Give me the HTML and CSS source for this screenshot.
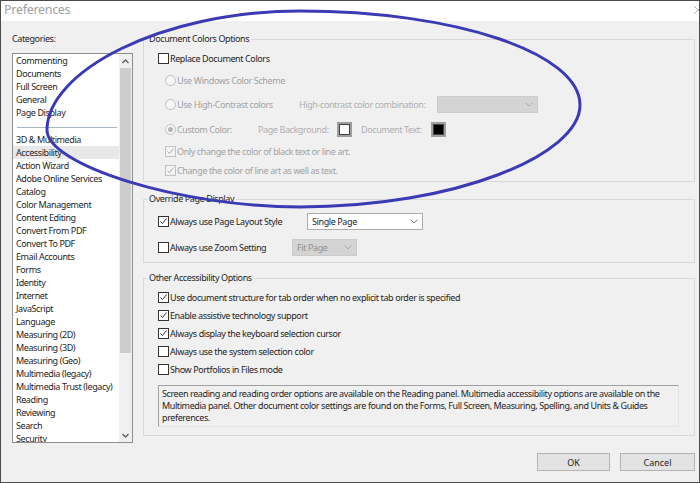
FILE: index.html
```html
<!DOCTYPE html>
<html lang="en">
<head>
  <meta charset="UTF-8" />
  <title>Preferences</title>
  <link rel="stylesheet" href="styles.css">
</head>
<body>
  <div class="window">
    <div class="titlebar">
      <span class="title">Preferences</span>
      <svg class="close" width="10" height="10" viewBox="0 0 10 10"><path d="M1 1l8 8M9 1l-8 8"/></svg>
    </div>

    <div class="main">
      <!-- categories -->
      <div class="sidebar">
        <div class="label">Categories:</div>
        <div class="listbox">
          <ul class="items">
            <li>Commenting</li>
            <li>Documents</li>
            <li>Full Screen</li>
            <li>General</li>
            <li>Page Display</li>
            <li class="sep"></li>
            <li>3D &amp; Multimedia</li>
            <li class="selected">Accessibility</li>
            <li>Action Wizard</li>
            <li>Adobe Online Services</li>
            <li>Catalog</li>
            <li>Color Management</li>
            <li>Content Editing</li>
            <li>Convert From PDF</li>
            <li>Convert To PDF</li>
            <li>Email Accounts</li>
            <li>Forms</li>
            <li>Identity</li>
            <li>Internet</li>
            <li>JavaScript</li>
            <li>Language</li>
            <li>Measuring (2D)</li>
            <li>Measuring (3D)</li>
            <li>Measuring (Geo)</li>
            <li>Multimedia (legacy)</li>
            <li>Multimedia Trust (legacy)</li>
            <li>Reading</li>
            <li>Reviewing</li>
            <li>Search</li>
            <li>Security</li>
          </ul>
          <div class="scrollbar">
            <div class="arrow"><svg width="7" height="5" viewBox="0 0 7 5"><path d="M0.5 4l3-3 3 3"/></svg></div>
            <div class="track"><div class="thumb"></div></div>
            <div class="arrow"><svg width="7" height="5" viewBox="0 0 7 5"><path d="M0.5 1l3 3 3-3"/></svg></div>
          </div>
        </div>
      </div>

      <div class="content">
        <!-- Document Colors Options -->
        <fieldset class="group">
          <legend>Document Colors Options</legend>
          <div class="rows colors">
            <div class="row h20">
              <span class="check"></span><span>Replace Document Colors</span>
            </div>
            <div class="row h24 indent off">
              <span class="radio"></span><span>Use Windows Color Scheme</span>
            </div>
            <div class="row h24 indent off">
              <span class="opt w134"><span class="radio"></span><span>Use High-Contrast colors</span></span>
              <span class="sub w138">High-contrast color combination:</span>
              <span class="select disabled w101"><span></span><svg class="chev" width="8" height="5" viewBox="0 0 8 5"><path d="M0.5 0.5l3.5 3.5 3.5-3.5"/></svg></span>
            </div>
            <div class="row h26 indent off">
              <span class="opt w93"><span class="radio on"></span><span>Custom Color:</span></span>
              <span class="sub w79">Page Background:</span>
              <span class="swatch"><span class="fill white"></span></span>
              <span class="sub w70 ml9">Document Text:</span>
              <span class="swatch"><span class="fill black"></span></span>
            </div>
            <div class="row h18 indent off">
              <span class="check on"><svg viewBox="0 0 9 9"><path d="M1.5 4.5l2 2 4-5"/></svg></span><span>Only change the color of black text or line art.</span>
            </div>
            <div class="row h20 indent off">
              <span class="check on"><svg viewBox="0 0 9 9"><path d="M1.5 4.5l2 2 4-5"/></svg></span><span>Change the color of line art as well as text.</span>
            </div>
          </div>
        </fieldset>

        <!-- Override Page Display -->
        <fieldset class="group">
          <legend>Override Page Display</legend>
          <div class="rows display">
            <div class="row h20">
              <span class="opt w149"><span class="check on"><svg viewBox="0 0 9 9"><path d="M1.5 4.5l2 2 4-5"/></svg></span><span>Always use Page Layout Style</span></span>
              <span class="select w116"><span>Single Page</span><svg class="chev" width="8" height="5" viewBox="0 0 8 5"><path d="M0.5 0.5l3.5 3.5 3.5-3.5"/></svg></span>
            </div>
            <div class="row h20">
              <span class="opt w134"><span class="check"></span><span>Always use Zoom Setting</span></span>
              <span class="select disabled w65"><span>Fit Page</span><svg class="chev" width="8" height="5" viewBox="0 0 8 5"><path d="M0.5 0.5l3.5 3.5 3.5-3.5"/></svg></span>
            </div>
          </div>
        </fieldset>

        <!-- Other Accessibility Options -->
        <fieldset class="group">
          <legend>Other Accessibility Options</legend>
          <div class="rows other">
            <div class="row h18">
              <span class="check on"><svg viewBox="0 0 9 9"><path d="M1.5 4.5l2 2 4-5"/></svg></span><span>Use document structure for tab order when no explicit tab order is specified</span>
            </div>
            <div class="row h18">
              <span class="check on"><svg viewBox="0 0 9 9"><path d="M1.5 4.5l2 2 4-5"/></svg></span><span>Enable assistive technology support</span>
            </div>
            <div class="row h18">
              <span class="check on"><svg viewBox="0 0 9 9"><path d="M1.5 4.5l2 2 4-5"/></svg></span><span>Always display the keyboard selection cursor</span>
            </div>
            <div class="row h18">
              <span class="check"></span><span>Always use the system selection color</span>
            </div>
            <div class="row h18">
              <span class="check"></span><span>Show Portfolios in Files mode</span>
            </div>
            <div class="note">
              Screen reading and reading order options are available on the Reading panel. Multimedia accessibility options are available on the<br>
              Multimedia panel. Other document color settings are found on the Forms, Full Screen, Measuring, Spelling, and Units &amp; Guides<br>
              preferences.
            </div>
          </div>
        </fieldset>
      </div>
    </div>

    <div class="footer">
      <button class="btn ok">OK</button>
      <button class="btn cancel">Cancel</button>
    </div>

    <!-- hand-drawn annotation -->
    <svg class="annotation" width="700" height="483" viewBox="0 0 700 483">
      <path d="M300 11C455 11 580 53 580 105C580 155 455 207 300 207C180 207 47 165 47 130C47 72 160 11 300 11Z"/>
    </svg>
  </div>
</body>
</html>
```

FILE: styles.css
```css
* {
  box-sizing: border-box;
}

html, body {
  margin: 0;
}

body {
  font-family: "Noto Sans", "Open Sans", sans-serif;
  font-size: 9px;
  letter-spacing: -0.4px;
  color: #1e1e1e;
  background: #fff;
}

.window {
  position: relative;
  width: 700px;
  height: 483px;
  border: 1px solid #4b4b4b;
  background: #f0f0f0;
  display: flex;
  flex-direction: column;
  overflow: hidden;
}

.titlebar {
  height: 20px;
  flex: none;
  background: #fff;
  display: flex;
  align-items: flex-start;
  justify-content: space-between;
  padding: 1px 0 0 3px;
}

.title {
  font-size: 12.5px;
  line-height: 16px;
  letter-spacing: -0.3px;
  color: #a0a0a0;
}

.close {
  margin: 3px -4px 0 0;
  stroke: #b5b5b5;
  stroke-width: 1;
}

.main {
  flex: 1;
  display: flex;
  gap: 10px;
  padding: 11px 4px 0 11px;
}

/* categories list */
.sidebar {
  width: 121px;
  flex: none;
}

.label {
  height: 14px;
  line-height: 14px;
  margin-bottom: 7px;
}

.listbox {
  height: 390px;
  border: 1px solid #8e8e8e;
  background: #fff;
  display: flex;
}

.items {
  flex: 1;
  list-style: none;
  margin: 0;
  padding: 0;
  overflow: hidden;
}

.items li {
  height: 13px;
  line-height: 13px;
  padding-left: 3px;
  white-space: nowrap;
}

.items li.selected {
  background: #e8e8e8;
}

.items li.sep {
  height: 14px;
  padding-top: 8px;
}

.items li.sep::after {
  content: "";
  display: block;
  height: 1px;
  margin: 0 2px 0 1px;
  background: #a3bac2;
}

.scrollbar {
  width: 13px;
  display: flex;
  flex-direction: column;
  background: #f0f0f0;
}

.arrow {
  height: 14px;
  display: flex;
  align-items: center;
  justify-content: center;
}

.arrow svg {
  fill: none;
  stroke: #606060;
  stroke-width: 1.4;
}

.track {
  flex: 1;
  padding: 0 1px;
}

.thumb {
  height: 285px;
  background: #cdcdcd;
}

/* right side groups */
.content {
  flex: 1;
  display: flex;
  flex-direction: column;
}

.group {
  margin: 0;
  padding: 0;
  border: 1px solid #d9d9d9;
  min-width: 0;
}

.group + .group {
  margin-top: 10px;
}

.group + .group + .group {
  margin-top: 8px;
}

.group legend {
  margin-left: 3px;
  padding: 0 2px;
  height: 14px;
  line-height: 14px;
}

.rows {
  padding-left: 14px;
}

.rows.colors {
  padding-top: 2px;
  padding-bottom: 1px;
}

.rows.display {
  padding-top: 5px;
  padding-bottom: 5px;
}

.rows.display .row + .row {
  margin-top: 6px;
}

.rows.other {
  padding-top: 3px;
  padding-bottom: 8px;
}

.row {
  display: flex;
  align-items: center;
  white-space: nowrap;
}

.h18 { height: 18px; }
.h20 { height: 20px; }
.h24 { height: 24px; }
.h26 { height: 26px; }

.indent {
  padding-left: 7px;
}

.off {
  color: #a2a2a2;
}

.opt {
  display: flex;
  align-items: center;
}

.sub {
  color: #afafaf;
}

.w65 { width: 65px; }
.w70 { width: 70px; }
.w79 { width: 79px; }
.w93 { width: 93px; }
.w101 { width: 101px; }
.w116 { width: 116px; }
.w134 { width: 134px; }
.w138 { width: 138px; }
.w149 { width: 149px; }
.ml9 { margin-left: 9px; }

.check,
.radio {
  flex: none;
  width: 11px;
  height: 11px;
  margin-right: 1px;
  border: 1px solid #333;
  background: #fff;
  display: flex;
  align-items: center;
  justify-content: center;
}

.check svg {
  width: 9px;
  height: 9px;
  fill: none;
  stroke: #333;
  stroke-width: 1;
}

.off .check {
  border-color: #c2c2c2;
  background: #f4f4f4;
}

.off .check svg {
  stroke: #a8a8a8;
}

.radio {
  border-radius: 50%;
  border-color: #c0c0c0;
  background: #f6f6f6;
}

.radio.on::after {
  content: "";
  width: 5px;
  height: 5px;
  border-radius: 50%;
  background: #b4b4b4;
}

.select {
  flex: none;
  height: 17px;
  border: 1px solid #acacac;
  background: #fff;
  display: flex;
  align-items: center;
  justify-content: space-between;
  padding: 0 4px 0 4px;
  color: #1e1e1e;
}

.select.disabled {
  background: #d4d4d4;
  border-color: #cbcbcb;
  color: #909090;
}

.chev {
  fill: none;
  stroke: #7a7a7a;
  stroke-width: 1;
}

.select.disabled .chev {
  stroke: #a9a9a9;
}

.swatch {
  flex: none;
  width: 15px;
  height: 15px;
  background: #9e9e9e;
  padding: 2px;
}

.swatch .fill {
  display: block;
  width: 100%;
  height: 100%;
  border: 1px solid #444;
}

.fill.white { background: #fff; }
.fill.black { background: #000; }

.note {
  margin: 7px 15px 0 0;
  height: 42px;
  border: 1px solid #e3e3e3;
  border-top-color: #a0a0a0;
  border-left-color: #a0a0a0;
  padding: 2px 3px;
  line-height: 12px;
  white-space: nowrap;
  color: #1e1e1e;
}

/* buttons */
.footer {
  flex: none;
  display: flex;
  justify-content: flex-end;
  gap: 10px;
  padding: 0 4px 11px 0;
}

.btn {
  height: 18px;
  font: inherit;
  color: #1e1e1e;
  background: #e3e3e3;
  border: 1px solid #b4b4b4;
  padding: 0;
}

.btn.ok { width: 73px; }
.btn.cancel { width: 75px; }

.annotation {
  position: absolute;
  left: -1px;
  top: -1px;
  pointer-events: none;
}

.annotation path {
  fill: none;
  stroke: #3a3ab4;
  stroke-width: 3;
}
```
